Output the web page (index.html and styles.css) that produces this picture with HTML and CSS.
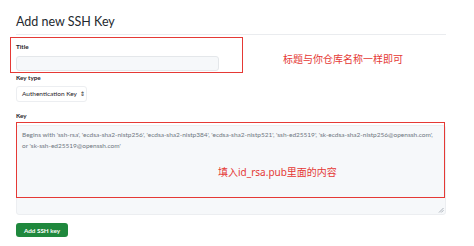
FILE: index.html
```html
<!DOCTYPE html>
<html lang="zh">
<head>
<meta charset="utf-8">
<title>Add new SSH Key</title>
<link rel="stylesheet" href="styles.css">
</head>
<body>
<div class="page">
  <h2 class="heading">Add new SSH Key</h2>
  <form class="form">
    <div class="field field-title">
      <label class="label">Title</label>
      <input class="input" type="text">
    </div>
    <div class="field field-type">
      <label class="label">Key type</label>
      <div class="select">Authentication Key <span class="arrows">&#8661;</span></div>
    </div>
    <div class="field field-key">
      <label class="label">Key</label>
      <div class="textarea">
        <div class="placeholder">Begins with 'ssh-rsa', 'ecdsa-sha2-nistp256', 'ecdsa-sha2-nistp384', 'ecdsa-sha2-nistp521', 'ssh-ed25519', 'sk-ecdsa-sha2-nistp256@openssh.com',<br>or 'sk-ssh-ed25519@openssh.com'</div>
        <svg class="grip" width="6" height="6" viewBox="0 0 6 6"><path d="M1 5.5L5.5 1M3.2 5.5L5.5 3.2" stroke="#8c959f" stroke-width="0.7" fill="none"/></svg>
      </div>
    </div>
    <button class="button" type="button">Add SSH key</button>
  </form>
  <div class="mark mark-title"></div>
  <div class="note note-title">标题与你仓库名称一样即可</div>
  <div class="mark mark-key"></div>
  <div class="note note-key">填入id_rsa.pub里面的内容</div>
</div>
</body>
</html>
```

FILE: styles.css
```css
* { box-sizing: border-box; }
html, body { margin: 0; padding: 0; background: #ffffff; }
body {
  font-family: Lato, "Noto Sans", "Noto Sans CJK SC", sans-serif;
  color: #1f2328;
  width: 474px;
  height: 246px;
  overflow: hidden;
}
.page {
  position: relative;
  padding: 12px 28px 0 16px;
}
.heading {
  margin: 0;
  font-weight: 400;
  font-size: 12.5px;
  line-height: 20px;
  padding-bottom: 2px;
  border-bottom: 1px solid #eaecef;
  color: #24292f;
}
.form {
  display: flex;
  flex-direction: column;
  align-items: flex-start;
}
.field {
  display: flex;
  flex-direction: column;
  align-items: flex-start;
}
.label {
  font-size: 6.3px;
  font-weight: 700;
  line-height: 8px;
  color: #1f2328;
}
.field-title { margin-top: 8px; }
.field-title .label { margin-bottom: 5px; }
.input {
  width: 203px;
  height: 15px;
  border: 1px solid #e4e7ea;
  border-radius: 3px;
  background: #f6f8fa;
  padding: 0;
  margin: 0;
}
.field-type { margin-top: 3px; }
.field-type .label { margin-bottom: 4px; }
.select {
  width: 71px;
  height: 16px;
  border: 1px solid #eceef1;
  border-radius: 3px;
  background: #ffffff;
  font-size: 6.5px;
  line-height: 14px;
  padding-left: 5px;
  color: #1f2328;
  white-space: nowrap;
}
.arrows { font-size: 6px; margin-left: 2px; }
.field-key { margin-top: 10px; }
.field-key .label { margin-bottom: 5px; }
.textarea {
  position: relative;
  width: 430px;
  height: 90px;
  border: 1px solid #eceef1;
  border-radius: 3px;
  background: #f6f8fa;
  padding: 4px 5px;
}
.placeholder {
  font-size: 6.5px;
  line-height: 10.5px;
  color: #6e7781;
  white-space: nowrap;
}
.grip { position: absolute; right: 1px; bottom: 1px; }
.button {
  margin-top: 8px;
  width: 52px;
  height: 14px;
  border: 0;
  border-radius: 3px;
  background: #1f883d;
  color: #ffffff;
  font-family: inherit;
  font-size: 6.3px;
  font-weight: 700;
  padding: 0;
}
.mark {
  position: absolute;
  border: 1.5px solid #e53935;
  pointer-events: none;
}
.mark-title { left: 10px; top: 37px; width: 233px; height: 36px; }
.mark-key { left: 16px; top: 122px; width: 429px; height: 76px; }
.note {
  position: absolute;
  color: #e53935;
  font-family: "Noto Sans CJK SC", sans-serif;
  font-size: 10px;
  line-height: 12px;
  white-space: nowrap;
}
.note-title { left: 283px; top: 53px; }
.note-key { left: 218px; top: 166px; font-family: "Noto Sans", "Noto Sans CJK SC", sans-serif; }
```
